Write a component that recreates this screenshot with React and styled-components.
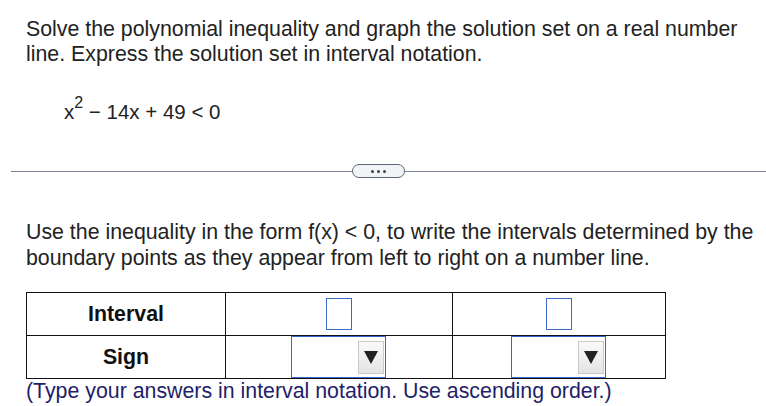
import React from "react";
import styled, { createGlobalStyle } from "styled-components";

const GlobalStyle = createGlobalStyle`
  body {
    margin: 0;
    background: #fff;
    font-family: "Liberation Sans", Arial, sans-serif;
    color: #222;
  }
`;

const Page = styled.div`
  width: 766px;
  height: 406px;
  overflow: hidden;
  box-sizing: border-box;
  padding-top: 17px;
`;

const Text = styled.p`
  margin: 0;
  padding-left: 26px;
  padding-right: 6px;
  font-size: 21.33px;
  line-height: ${(p) => p.lh || 25}px;
`;

const Equation = styled.div`
  padding: 32px 0 0 64px;
  font-size: 20.5px;
  line-height: 25px;
  height: 25px;
  sup {
    font-size: 16px;
    line-height: 0;
    position: relative;
    top: -3px;
  }
`;

const Divider = styled.div`
  display: flex;
  align-items: center;
  margin: 40px 0 0 11px;
  height: 14px;
  &::before,
  &::after {
    content: "";
    height: 1px;
    background: #7b8497;
  }
  &::before {
    width: 341px;
  }
  &::after {
    flex: 1;
  }
`;

const Pill = styled.div`
  width: 51px;
  height: 12px;
  border: 1px solid #5d6678;
  border-radius: 8px;
  background: #f1f3f6;
  display: flex;
  align-items: center;
  justify-content: center;
  gap: 3px;
  span {
    width: 3px;
    height: 3px;
    border-radius: 50%;
    background: #3c4352;
  }
`;

const Section = styled.div`
  margin-top: 41px;
`;

const Table = styled.table`
  margin: 21px 0 0 26px;
  border-collapse: collapse;
  width: 640px;
  td {
    border: 1.5px solid #111;
    padding: 0;
    text-align: center;
    vertical-align: middle;
  }
`;

const Label = styled.td`
  font-weight: bold;
  font-size: 21.33px;
  color: #111;
  width: ${(p) => p.w}px;
  height: ${(p) => p.h}px;
`;

const Cell = styled.td`
  width: ${(p) => p.w}px;
`;

const Box = styled.div`
  display: inline-block;
  vertical-align: middle;
  width: 24px;
  height: 30px;
  border: 1px solid #3d6cc6;
`;

const Select = styled.div`
  margin: -1px auto;
  width: 92px;
  height: 40px;
  border: 1px solid #3667cc;
  background: #fff;
  display: flex;
  justify-content: flex-end;
  align-items: center;
  padding-right: 1px;
`;

const Arrow = styled.div`
  width: 24px;
  height: 31px;
  border: 1px solid #c9c9c9;
  background: linear-gradient(#fafafa, #e4e4e4);
  display: flex;
  align-items: center;
  justify-content: center;
  &::after {
    content: "";
    border-left: 7.5px solid transparent;
    border-right: 7.5px solid transparent;
    border-top: 13px solid #222;
  }
`;

const Note = styled.div`
  padding-left: 26px;
  font-size: 21.33px;
  line-height: 24px;
  color: #1f1e6a;
`;

export default function App() {
  return (
    <Page>
      <GlobalStyle />
      <Text>
        Solve the polynomial inequality and graph the solution set on a real
        number line. Express the solution set in interval notation.
      </Text>
      <Equation>
        x<sup>2</sup> − 14x + 49 &lt; 0
      </Equation>
      <Divider>
        <Pill>
          <span />
          <span />
          <span />
        </Pill>
      </Divider>
      <Section>
        <Text lh={26}>
          Use the inequality in the form f(x) &lt; 0, to write the intervals
          determined by the boundary points as they appear from left to right on
          a number line.
        </Text>
      </Section>
      <Table>
        <tbody>
          <tr>
            <Label w={199} h={42}>Interval</Label>
            <Cell w={227}>
              <Box />
            </Cell>
            <Cell w={213}>
              <Box />
            </Cell>
          </tr>
          <tr>
            <Label h={42}>Sign</Label>
            <Cell>
              <Select>
                <Arrow />
              </Select>
            </Cell>
            <Cell>
              <Select>
                <Arrow />
              </Select>
            </Cell>
          </tr>
        </tbody>
      </Table>
      <Note>(Type your answers in interval notation. Use ascending order.)</Note>
    </Page>
  );
}
